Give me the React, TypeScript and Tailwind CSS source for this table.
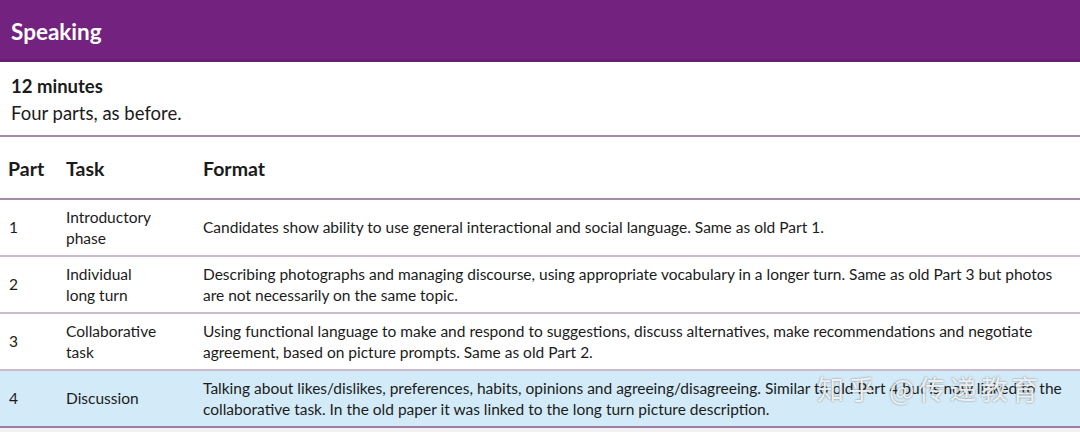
import React from "react";

const rows = [
  { part: "1", task: ["Introductory", "phase"], format: "Candidates show ability to use general interactional and social language. Same as old Part 1.", blue: false },
  { part: "2", task: ["Individual", "long turn"], format: "Describing photographs and managing discourse, using appropriate vocabulary in a longer turn. Same as old Part 3 but photos are not necessarily on the same topic.", blue: false },
  { part: "3", task: ["Collaborative", "task"], format: "Using functional language to make and respond to suggestions, discuss alternatives, make recommendations and negotiate agreement, based on picture prompts. Same as old Part 2.", blue: false },
  { part: "4", task: ["Discussion"], format: "Talking about likes/dislikes, preferences, habits, opinions and agreeing/disagreeing. Similar to old Part 4 but is now linked to the collaborative task. In the old paper it was linked to the long turn picture description.", blue: true },
];

export default function App() {
  return (
    <div className="w-[1080px] h-[432px] overflow-hidden bg-[#f1f1f1] text-[#1b1b1b]" style={{ fontFamily: '"Lato", "Noto Sans", sans-serif' }}>
      <div className="h-[62px] bg-[#73237f] border-b-[3px] border-[#65206f] flex items-center px-[11px] pt-[4px]">
        <span className="text-white font-bold text-[22.5px]">Speaking</span>
      </div>
      <div className="bg-white h-[73px] px-[11px] pt-[12px] flex flex-col">
        <span className="font-bold text-[18.5px] leading-[25px]">12 minutes</span>
        <span className="text-[18.5px] leading-[28px]">Four parts, as before.</span>
      </div>
      <div className="bg-white border-t-2 border-[#a68aa9]">
        <div className="flex items-center h-[63px] border-b-2 border-[#a68aa9] font-bold text-[19.5px] pt-[2px]">
          <div className="w-[66px] pl-[8px]">Part</div>
          <div className="w-[137px]">Task</div>
          <div className="flex-1">Format</div>
        </div>
        {rows.map((r) => (
          <div key={r.part} className={`flex items-center h-[57px] border-b-2 ${r.blue ? "bg-[#d3ebf8] border-[#9d7fa3]" : "border-[#cbbccd]"} text-[15.5px] leading-[21px]`}>
            <div className="w-[66px] pl-[9px]">{r.part}</div>
            <div className="w-[137px] flex flex-col">
              {r.task.map((t) => (
                <span key={t}>{t}</span>
              ))}
            </div>
            <div className="flex-1 pr-[12px] relative">
              {r.format}
              {r.blue && (
                <span className="absolute left-[614px] top-[-5px] text-[27px] leading-[32px] tracking-[4px] text-white/85 whitespace-nowrap" style={{ fontFamily: '"Noto Sans CJK SC", sans-serif', textShadow: "0 0 2px rgba(60,60,60,0.65)" }}>
                  知乎 @传递教育
                </span>
              )}
            </div>
          </div>
        ))}
      </div>
    </div>
  );
}
